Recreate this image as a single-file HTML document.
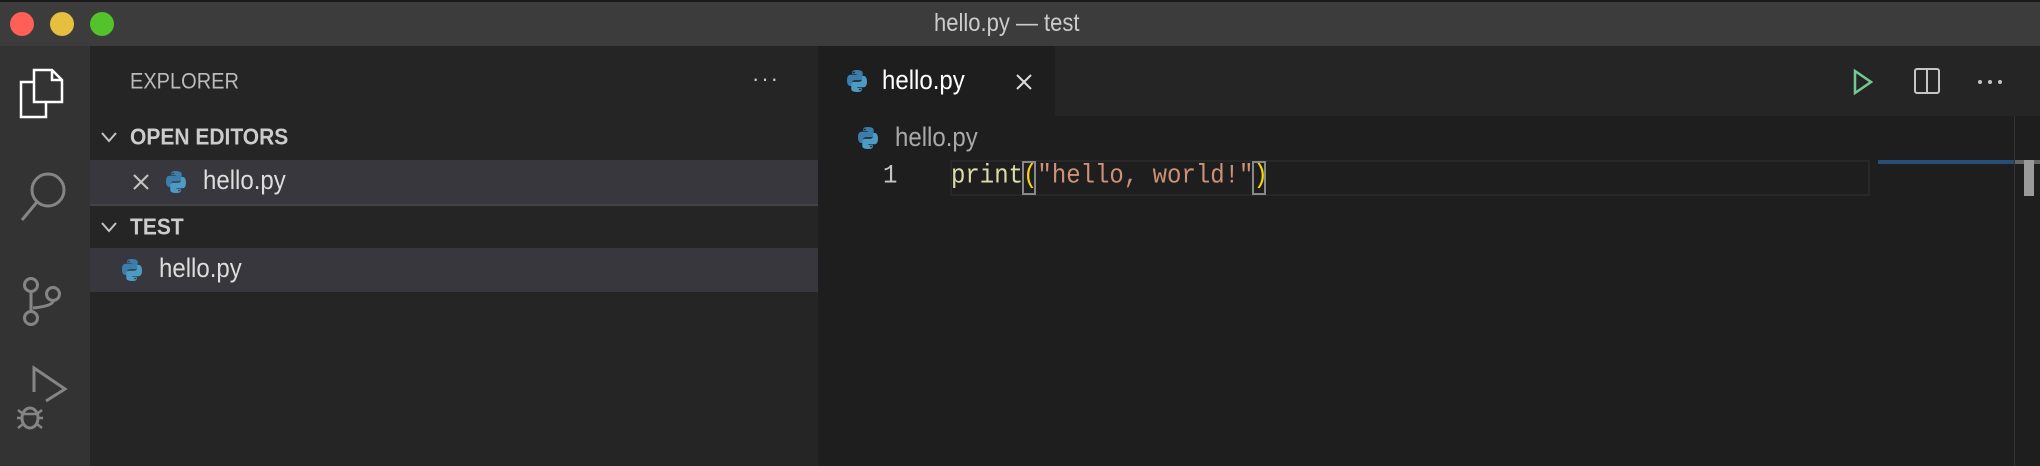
<!DOCTYPE html><html><head><style>
*{margin:0;padding:0;box-sizing:border-box}
body{width:2040px;height:466px;background:#1e1e1e;position:relative;overflow:hidden;font-family:"Liberation Sans",sans-serif}
.a{position:absolute}
.t{white-space:nowrap}
.s{transform:scaleY(1.12);transform-origin:left center}
</style></head><body>
<div class="a" style="left:0;top:0;width:2040px;height:46px;background:#3c3c3c;border-top:2px solid #1a1a1a"></div>
<div class="a" style="left:10px;top:12px;width:24px;height:24px;border-radius:50%;background:#fe5f57"></div>
<div class="a" style="left:50px;top:12px;width:24px;height:24px;border-radius:50%;background:#e6bf3e"></div>
<div class="a" style="left:90px;top:12px;width:24px;height:24px;border-radius:50%;background:#53c22b"></div>
<div class="a t s" style="left:934px;top:10px;font-size:22px;color:#cccccc">hello.py — test</div>
<div class="a" style="left:0;top:46px;width:90px;height:420px;background:#333333"></div>
<svg class="a" style="left:0;top:46px" width="90" height="420" fill="none" stroke-width="3">
<path d="M34 24 H52 L62 34 V56 H34 Z M52 24 V34 H62" stroke="#fff" stroke-width="2.5"/>
<path d="M34 36 H21 V71 H46 V56" stroke="#fff" stroke-width="2.5"/>
<circle cx="48" cy="144" r="16" stroke="#858585"/>
<path d="M37 156 L22 174" stroke="#858585"/>
<circle cx="31" cy="239" r="6.5" stroke="#858585"/><circle cx="53" cy="248" r="6.5" stroke="#858585"/><circle cx="31" cy="272" r="6.5" stroke="#858585"/>
<path d="M31 246 V265 M53 255 Q53 260 33 262" stroke="#858585"/>
<path d="M34 346 V322 L65 343 L46 355" stroke="#858585"/>
<ellipse cx="30" cy="372" rx="8" ry="10" stroke="#858585"/>
<path d="M18 364 L23 368 M42 364 L37 368 M17 372 H22 M38 372 H43 M18 382 L23 378 M42 382 L37 378 M23 368 H37" stroke="#858585" stroke-width="2.5"/>
</svg>
<div class="a" style="left:90px;top:46px;width:728px;height:420px;background:#252526"></div>
<div class="a t s" style="left:130px;top:71px;font-size:20px;color:#bbbbbb">EXPLORER</div>
<div class="a t" style="left:752px;top:66px;font-size:22px;color:#ccc;letter-spacing:2px">···</div>
<svg class="a" style="left:100px;top:130px" width="20" height="120" fill="none" stroke="#c5c5c5" stroke-width="2"><path d="M2 3 L9 11 L16 3"/><path d="M2 93 L9 101 L16 93"/></svg>
<div class="a t s" style="left:130px;top:126px;font-size:21px;font-weight:bold;color:#cccccc">OPEN EDITORS</div>
<div class="a" style="left:90px;top:160px;width:728px;height:44px;background:#37373d"></div>
<div class="a" style="left:90px;top:204px;width:728px;height:2px;background:#444"></div>
<svg class="a" style="left:132px;top:173px" width="18" height="18" stroke="#c5c5c5" stroke-width="2"><path d="M2 2L16 16M16 2L2 16"/></svg>
<svg class="a" width="0" height="0"><defs><symbol id="py" viewBox="0 0 20 22"><path d="M9.5 0C5 0 5.3 2 5.3 2v2.1h4.4v.7H3.5S0 4.4 0 10.3s3 5.7 3 5.7h1.9v-2.7s-.1-3 3-3h4.9s2.9.1 2.9-2.8V2.9S16.1 0 9.5 0zM7 1.6a.9.9 0 110 1.8.9.9 0 010-1.8z" fill="#3b7eab"/><path d="M10.5 22c4.5 0 4.2-2 4.2-2v-2.1h-4.4v-.7h6.2s3.5.4 3.5-5.5-3-5.700-3-5.7h-1.9v2.7s.1 3-3 3H7.2s-2.9-.1-2.9 2.8v4.6S3.9 22 10.5 22zm2.5-1.6a.9.9 0 110-1.8.9.9 0 010 1.8z" fill="#4d9bc5"/></symbol></defs></svg>
<svg class="a" style="left:166px;top:171px" width="20" height="22"><use href="#py"/></svg>
<div class="a t s" style="left:203px;top:167px;font-size:24px;color:#dddddd">hello.py</div>
<div class="a t s" style="left:130px;top:216px;font-size:21px;font-weight:bold;color:#cccccc">TEST</div>
<div class="a" style="left:90px;top:248px;width:728px;height:44px;background:#37373d"></div>
<svg class="a" style="left:122px;top:259px" width="20" height="22"><use href="#py"/></svg>
<div class="a t s" style="left:159px;top:255px;font-size:24px;color:#dddddd">hello.py</div>
<div class="a" style="left:818px;top:46px;width:1222px;height:70px;background:#252526"></div>
<div class="a" style="left:818px;top:46px;width:237px;height:70px;background:#1e1e1e"></div>
<svg class="a" style="left:847px;top:70px" width="20" height="22"><use href="#py"/></svg>
<div class="a t s" style="left:882px;top:67px;font-size:24px;color:#ffffff">hello.py</div>
<svg class="a" style="left:1016px;top:74px" width="16" height="16" stroke="#ddd" stroke-width="2"><path d="M1 1L15 15M15 1L1 15"/></svg>
<svg class="a" style="left:1850px;top:66px" width="30" height="30" fill="none" stroke="#73c991" stroke-width="2.5"><path d="M5 5 V27 L21 16 Z"/></svg>
<svg class="a" style="left:1912px;top:66px" width="30" height="30" fill="none" stroke="#c5c5c5" stroke-width="2"><rect x="3" y="3" width="24" height="24" rx="2"/><path d="M15 3V27"/></svg>
<svg class="a" style="left:1975px;top:77px" width="30" height="10" fill="#c5c5c5"><circle cx="5" cy="5" r="2"/><circle cx="15" cy="5" r="2"/><circle cx="25" cy="5" r="2"/></svg>
<svg class="a" style="left:858px;top:127px" width="20" height="22"><use href="#py"/></svg>
<div class="a t s" style="left:895px;top:124px;font-size:24px;color:#a9a9a9">hello.py</div>
<div class="a" style="left:950px;top:160px;width:920px;height:36px;border:2px solid #282828"></div>
<div class="a t s" style="left:883px;top:163px;font-family:'Liberation Mono',monospace;font-size:24px;color:#c6c6c6">1</div>
<div class="a" style="left:1022px;top:161px;width:14px;height:34px;border:2px solid #888"></div>
<div class="a" style="left:1252px;top:161px;width:14px;height:34px;border:2px solid #888"></div>
<div class="a t s" style="left:951px;top:163px;font-family:'Liberation Mono',monospace;font-size:24px;color:#dcdcaa">print<span style="color:#ffd700">(</span><span style="color:#ce9178">"hello, world!"</span><span style="color:#ffd700">)</span></div>
<div class="a" style="left:1878px;top:160px;width:136px;height:4px;background:#264f78"></div>
<div class="a" style="left:2014px;top:116px;width:1px;height:350px;background:#333"></div>
<div class="a" style="left:2015px;top:160px;width:25px;height:4px;background:#666"></div>
<div class="a" style="left:2024px;top:160px;width:10px;height:36px;background:#9a9a9a"></div>
</body></html>
